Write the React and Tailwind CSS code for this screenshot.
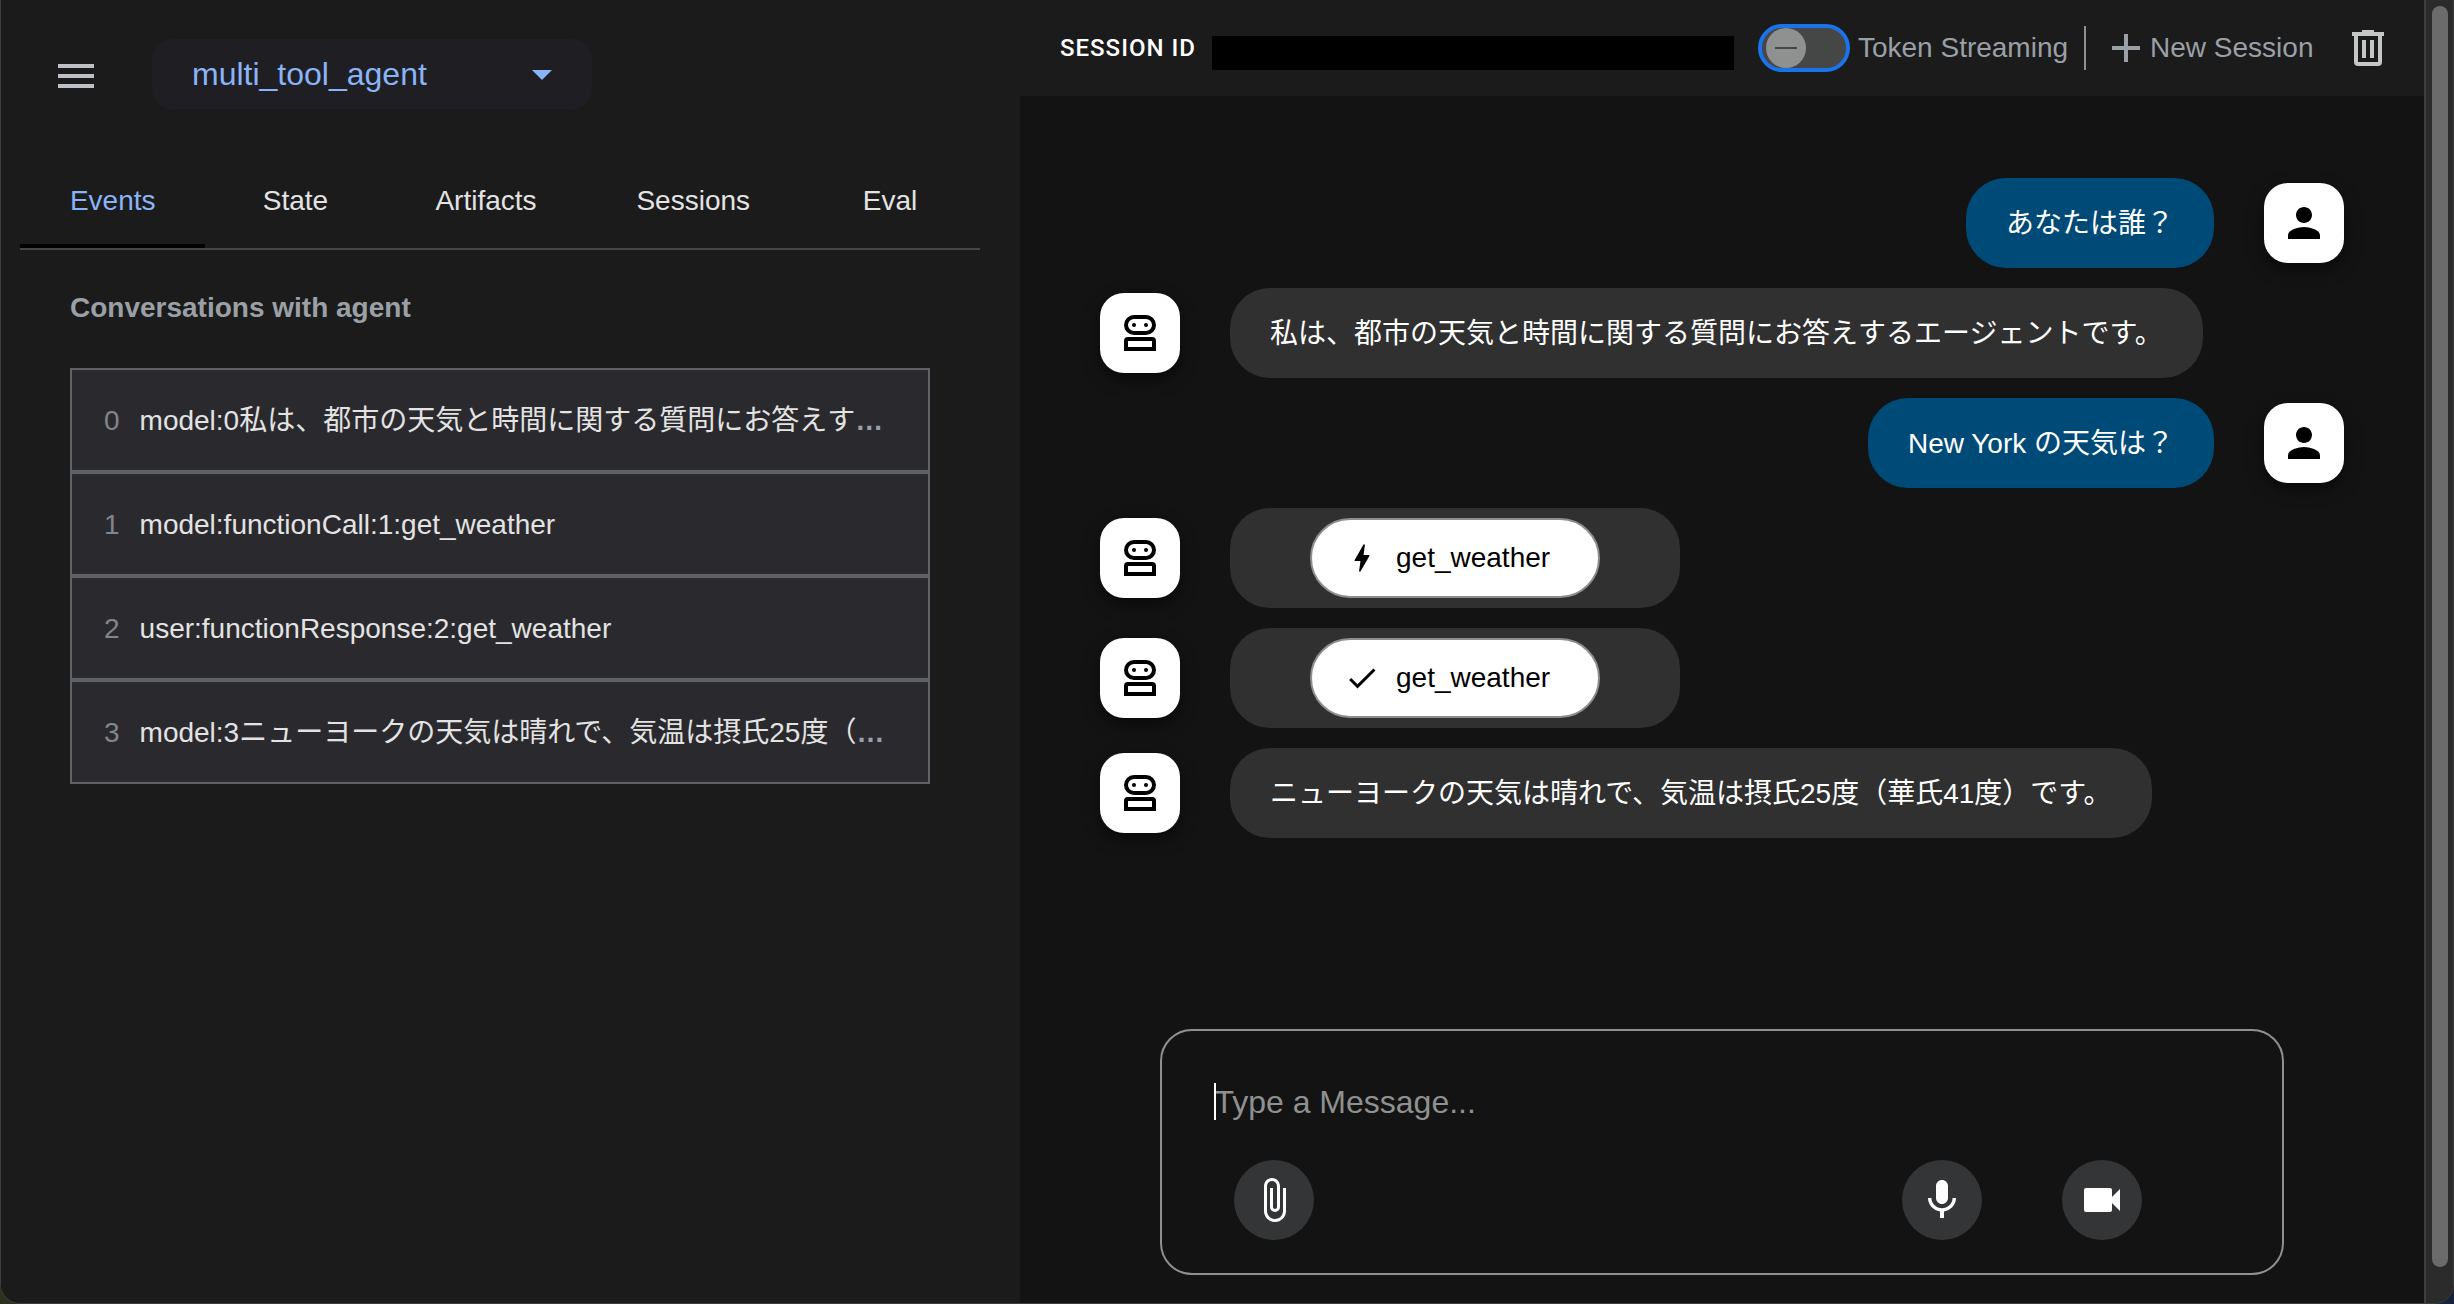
import React, { useState } from "react";
import {
  MdMenu,
  MdArrowDropDown,
  MdAdd,
  MdPerson,
  MdAttachFile,
  MdMic,
  MdVideocam,
  MdBolt,
  MdCheck,
} from "react-icons/md";

const TABS = ["Events", "State", "Artifacts", "Sessions", "Eval"];

const EVENTS = [
  { title: "model:0私は、都市の天気と時間に関する質問にお答えす", more: true },
  { title: "model:functionCall:1:get_weather" },
  { title: "user:functionResponse:2:get_weather" },
  { title: "model:3ニューヨークの天気は晴れで、気温は摂氏25度（", more: true },
];

const MESSAGES = [
  { role: "user", text: "あなたは誰？" },
  { role: "bot", text: "私は、都市の天気と時間に関する質問にお答えするエージェントです。" },
  { role: "user", text: "New York の天気は？" },
  { role: "bot", call: "get_weather" },
  { role: "bot", response: "get_weather" },
  { role: "bot", text: "ニューヨークの天気は晴れで、気温は摂氏25度（華氏41度）です。" },
];

const RobotIcon = () => (
  <svg viewBox="0 0 48 48" className="w-12 h-12" fill="none" stroke="currentColor" strokeWidth="4" aria-hidden="true">
    <rect x="10" y="8" width="28" height="16" rx="8" />
    <circle cx="18" cy="16" r="2" fill="currentColor" stroke="none" />
    <circle cx="30" cy="16" r="2" fill="currentColor" stroke="none" />
    <path d="M10 40V32a2 2 0 0 1 2-2h24a2 2 0 0 1 2 2v8z" />
  </svg>
);

const TrashIcon = () => (
  <svg viewBox="0 0 24 24" className="w-12 h-12" fill="currentColor" aria-hidden="true">
    <path d="M7 21a2 2 0 0 1-2-2V6H4V4h5V3h6v1h5v2h-1v13a2 2 0 0 1-2 2H7zM17 6H7v13h10V6zM9 17h2V8H9v9zm4 0h2V8h-2v9z" fillRule="evenodd" />
  </svg>
);

const Avatar = ({ children }) => (
  <div className="w-20 h-20 shrink-0 rounded-3xl bg-white text-black flex items-center justify-center shadow-[0_6px_16px_rgba(0,0,0,0.5)]">
    {children}
  </div>
);

const Message = ({ message }) => {
  if (message.role === "user") {
    return (
      <div className="flex items-center justify-end gap-[50px]">
        <div className="min-h-[90px] flex items-center px-10 pt-0.5 rounded-[40px] bg-[#004a77] text-white">
          {message.text}
        </div>
        <Avatar>
          <MdPerson className="w-12 h-12" />
        </Avatar>
      </div>
    );
  }

  return (
    <div className="flex items-center gap-[50px]">
      <Avatar>
        <RobotIcon />
      </Avatar>
      {message.text ? (
        <div className="min-h-[90px] flex items-center px-10 pt-0.5 rounded-[40px] bg-[#303030] text-white">
          {message.text}
        </div>
      ) : (
        <div className="px-20 py-2.5 rounded-[40px] bg-[#303030]">
          <button className="h-20 w-[290px] pl-8 flex items-center gap-4 rounded-full border-2 border-[#8e8e8e] bg-white text-black">
            {message.call ? <MdBolt className="w-9 h-9" /> : <MdCheck className="w-9 h-9" />}
            <span>{message.call || message.response}</span>
          </button>
        </div>
      )}
    </div>
  );
};

const Sidebar = () => {
  const [activeTab, setActiveTab] = useState("Events");

  return (
    <aside className="w-[1019px] shrink-0 bg-[#1b1b1b]">
      <div className="flex items-center gap-[52px] pl-[51px] pt-[39px]">
        <button aria-label="Toggle side panel" className="pt-1 text-[#bdc1c6]">
          <MdMenu className="w-12 h-12" />
        </button>
        <div className="relative w-[440px]">
          <select
            aria-label="Agent"
            className="appearance-none w-full h-[70px] pl-10 pr-16 rounded-[20px] bg-[#1f1f23] text-[32px] text-[#8ab4f8]"
          >
            <option>multi_tool_agent</option>
          </select>
          <MdArrowDropDown className="absolute right-[26px] top-[11px] w-12 h-12 text-[#8ab4f8] pointer-events-none" />
        </div>
      </div>

      <div role="tablist" className="mt-[43px] ml-[19px] mr-10 flex border-b-2 border-[#444746]">
        {TABS.map((tab) => (
          <button
            key={tab}
            role="tab"
            aria-selected={activeTab === tab}
            onClick={() => setActiveTab(tab)}
            className={`grow min-w-[180px] px-12 pt-1.5 h-24 border-b-4 ${
              activeTab === tab ? "text-[#8ab4f8] border-black" : "text-[#e3e3e3] border-transparent"
            }`}
          >
            {tab}
          </button>
        ))}
      </div>

      <div className="pl-[69px] pr-[90px] pt-[38px]">
        <h2 className="font-bold leading-10 text-[#9aa0a6]">Conversations with agent</h2>
        <div className="mt-10">
          {EVENTS.map((event, index) => (
            <button
              key={event.title}
              className="w-full h-[104px] px-8 pt-0.5 flex items-center gap-5 border-2 border-[#5f6368] bg-[#2a2a2e] text-left"
            >
              <span className="text-[#80868b]">{index}</span>
              <span className="whitespace-nowrap text-[#e3e3e3]">
                {event.title}
                {event.more && <span className="font-bold text-[#9aa0a6]">…</span>}
              </span>
            </button>
          ))}
        </div>
      </div>
    </aside>
  );
};

const Toolbar = () => {
  const [streaming, setStreaming] = useState(false);

  return (
    <header className="h-24 shrink-0 pl-10 pr-8 flex items-center bg-[#1b1b1b] text-[#9aa0a6]">
      <span className="font-['Roboto',sans-serif] font-medium text-2xl tracking-[1px] text-white">SESSION ID</span>
      <div className="ml-4 mt-2.5 w-[522px] h-[34px] bg-black" />
      <label className="ml-6 flex items-center gap-2 cursor-pointer">
        <input
          type="checkbox"
          role="switch"
          className="peer sr-only"
          checked={streaming}
          onChange={(e) => setStreaming(e.target.checked)}
        />
        <span className="w-[92px] h-12 px-1 flex items-center rounded-full border-4 border-[#1a73e8] bg-[#444746] peer-checked:justify-end">
          <span className="w-10 h-10 flex items-center justify-center rounded-full bg-[#8e918f]">
            <span className="w-[22px] h-0.5 bg-[#444746]" />
          </span>
        </span>
        <span>Token Streaming</span>
      </label>
      <div className="ml-4 w-0.5 h-11 bg-[#8e918f]" />
      <button className="ml-4 flex items-center">
        <MdAdd className="w-12 h-12" />
        New Session
      </button>
      <button aria-label="Delete session" className="ml-auto text-[#c4c7c5]">
        <TrashIcon />
      </button>
    </header>
  );
};

const RoundButton = ({ label, children }) => (
  <button
    aria-label={label}
    className="w-20 h-20 flex items-center justify-center rounded-full bg-[#333537] text-white"
  >
    {children}
  </button>
);

const Composer = () => (
  <div className="w-4/5 mx-auto mb-7 px-[52px] pt-[43px] pb-[33px] rounded-[32px] border-2 border-[#8e918f]">
    <div className="relative">
      <input
        type="text"
        autoFocus
        aria-label="Message"
        placeholder="Type a Message..."
        className="peer block w-full h-14 bg-transparent text-[32px] text-white placeholder-[#8e918f] caret-transparent not-placeholder-shown:caret-white outline-none"
      />
      {/* Caret for the empty field */}
      <span className="hidden peer-placeholder-shown:block absolute left-0 top-[9px] w-0.5 h-[37px] bg-white pointer-events-none" />
    </div>
    <div className="mt-[30px] pl-5 pr-[88px] flex items-center gap-20">
      <RoundButton label="Attach file">
        <MdAttachFile className="w-12 h-12" />
      </RoundButton>
      <div className="grow" />
      <RoundButton label="Use microphone">
        <MdMic className="w-12 h-12" />
      </RoundButton>
      <RoundButton label="Use camera">
        <MdVideocam className="w-12 h-12" />
      </RoundButton>
    </div>
  </div>
);

const App = () => {
  return (
    <div className="h-screen bg-linear-to-r from-[#2b3320] to-[#17233c]">
      <div className="flex h-full overflow-hidden rounded-b-[20px] border-x border-b border-[#3e3e3e] bg-[#131314] font-['Liberation_Sans','Noto_Sans_CJK_JP',sans-serif] text-[28px]">
        <Sidebar />
        <main className="flex-1 min-w-0 flex flex-col bg-[#131314]">
          <Toolbar />
          <div className="flex-1 overflow-hidden px-20 pt-[82px] flex flex-col gap-5">
            {MESSAGES.map((message, index) => (
              <Message key={index} message={message} />
            ))}
          </div>
          <Composer />
        </main>
        {/* Scrollbar */}
        <div className="w-[29px] shrink-0 pt-1.5 pb-9 pl-1.5 bg-[#2b2b2b] border-l-2 border-[#3e3e3e]">
          <div className="w-4 h-full rounded-full bg-[#6b6b6b]" />
        </div>
      </div>
    </div>
  );
};

export default App;
